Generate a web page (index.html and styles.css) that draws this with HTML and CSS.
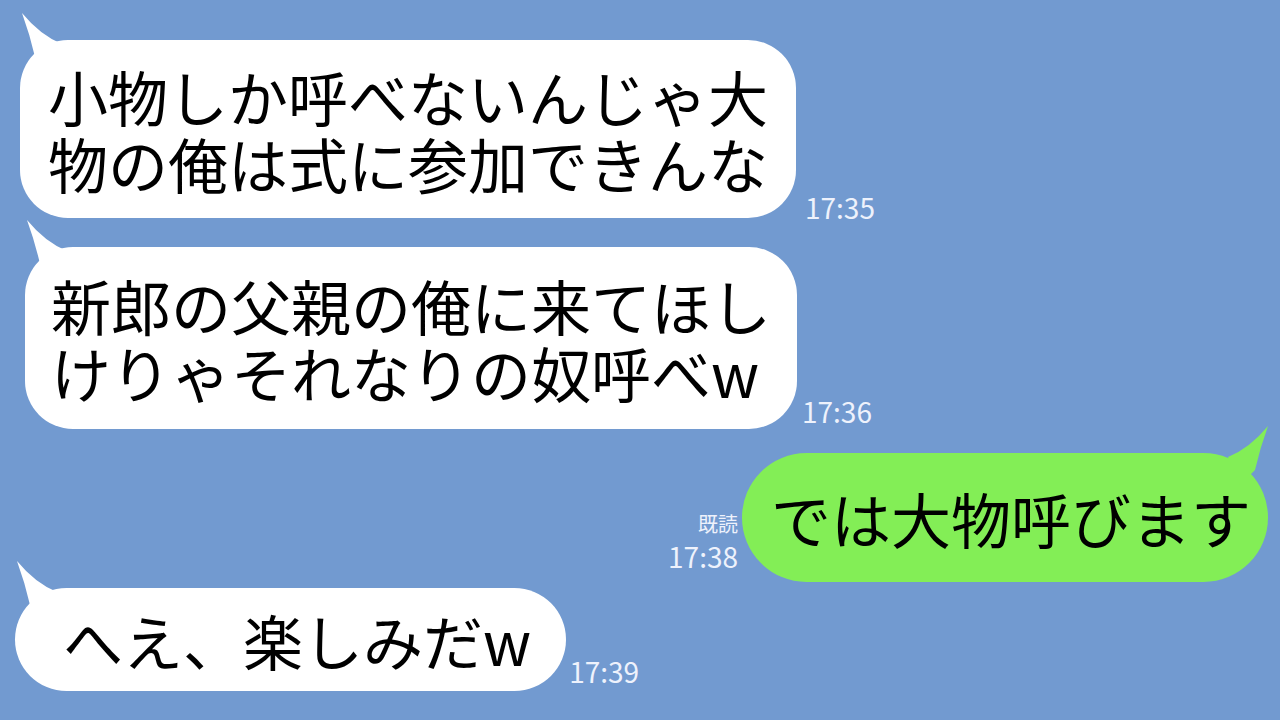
FILE: index.html
```html
<!DOCTYPE html>
<html lang="ja">
<head>
    <meta charset="UTF-8">
    <meta name="viewport" content="width=device-width, initial-scale=1.0">
    <title>トーク</title>
    <link rel="stylesheet" href="styles.css">
</head>
<body>
    <div class="chat">
        <div class="row first">
            <div class="bubble white b1">
                <svg class="tail" viewBox="0 0 60 64" width="60" height="64"><path d="M6,3 Q14,25 19,47 L34,62 L46,34 Q24,25 6,3 Z"/></svg>
                <span class="line">小物しか呼べないんじゃ大</span>
                <span class="line">物の俺は式に参加できんな</span>
            </div>
            <div class="meta t1"><span class="time">17:35</span></div>
        </div>
        <div class="row second">
            <div class="bubble white b2">
                <svg class="tail" viewBox="0 0 60 64" width="60" height="64"><path d="M6,3 Q14,25 19,47 L34,62 L46,34 Q24,25 6,3 Z"/></svg>
                <span class="line">新郎の父親の俺に来てほし</span>
                <span class="line">けりゃそれなりの奴呼べw</span>
            </div>
            <div class="meta t2"><span class="time">17:36</span></div>
        </div>
        <div class="row mine">
            <div class="meta t3">
                <span class="read">既読</span>
                <span class="time">17:38</span>
            </div>
            <div class="bubble green b3">
                <svg class="tail" viewBox="0 0 60 64" width="60" height="64"><path d="M6,3 Q14,25 19,47 L34,62 L46,34 Q24,25 6,3 Z"/></svg>
                <span class="line">では大物呼びます</span>
            </div>
        </div>
        <div class="row last">
            <div class="bubble white b4">
                <svg class="tail" viewBox="0 0 60 64" width="60" height="64"><path d="M6,3 Q14,25 19,47 L34,62 L46,34 Q24,25 6,3 Z"/></svg>
                <span class="line">へえ、楽しみだw</span>
            </div>
            <div class="meta t4"><span class="time">17:39</span></div>
        </div>
    </div>
</body>
</html>
```

FILE: styles.css
```css
html, body {
    margin: 0;
    height: 100%;
}
body {
    background-color: #729ad0;
    font-family: "Noto Sans CJK JP", "Noto Sans", sans-serif;
    overflow: hidden;
}
.chat {
    display: flex;
    flex-direction: column;
    padding-top: 40px;
}
.row {
    display: flex;
    align-items: flex-end;
}
.row.first {
    margin-left: 20px;
}
.row.second {
    margin-top: 29px;
    margin-left: 25px;
}
.row.mine {
    margin-top: 24px;
    justify-content: flex-end;
    padding-right: 12px;
}
.row.last {
    margin-top: 6px;
    margin-left: 15px;
}
.bubble {
    position: relative;
    display: flex;
    flex-direction: column;
    color: #000;
    font-size: 60px;
    white-space: nowrap;
}
.line {
    display: block;
    height: 67px;
    line-height: 67px;
}
.bubble.white {
    background-color: #fff;
}
.bubble.white .tail path {
    fill: #fff;
}
.bubble.green {
    background-color: #83ee56;
}
.bubble.green .tail path {
    fill: #83ee56;
}
.tail {
    position: absolute;
    top: -30px;
    left: -4px;
}
.bubble.green .tail {
    left: auto;
    right: -6px;
    transform: scaleX(-1);
}
.b1 {
    padding: 22px 28px;
    border-radius: 48px;
}
.b2 {
    padding: 24px 26px;
    border-radius: 48px;
}
.b3 {
    padding: 31px 17px 31px 29px;
    border-radius: 65px;
}
.b4 {
    padding: 18px 35px 18px 48px;
    border-radius: 52px;
}
.meta {
    display: flex;
    flex-direction: column;
    color: #eef2fc;
}
.time {
    font-size: 28px;
    line-height: 28px;
}
.read {
    font-size: 20px;
    line-height: 22px;
    text-align: right;
    margin-bottom: 7px;
}
.t1 {
    margin-left: 9px;
    margin-bottom: -3px;
}
.t2 {
    margin-left: 5px;
    margin-bottom: 4px;
}
.t3 {
    align-items: flex-end;
    margin-right: 4px;
    margin-bottom: 12px;
}
.t4 {
    margin-left: 3px;
    margin-bottom: 6px;
}
```
